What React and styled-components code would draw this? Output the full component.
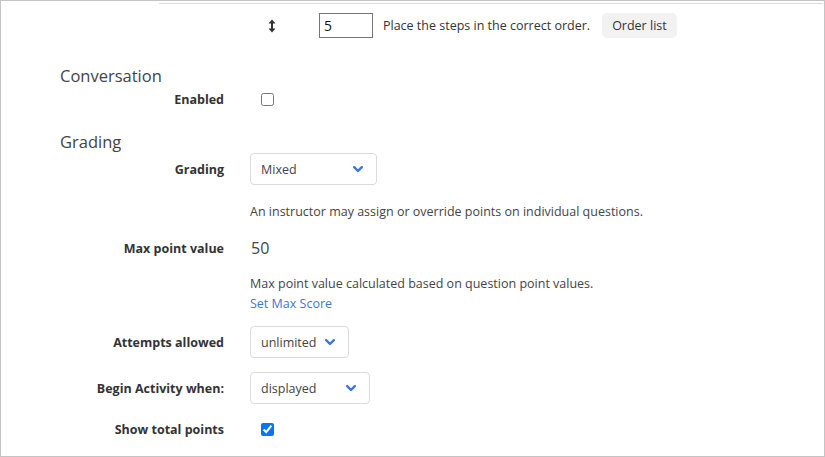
import React from "react";
import styled, { createGlobalStyle } from "styled-components";

const GlobalStyle = createGlobalStyle`
  html, body {
    margin: 0;
    padding: 0;
    background: #fff;
  }
  body {
    font-family: "Open Sans", "Liberation Sans", sans-serif;
    color: #333;
  }
`;

const Frame = styled.div`
  width: 825px;
  height: 457px;
  box-sizing: border-box;
  border: 1px solid #c4c4c4;
  overflow: hidden;
`;

const TopArea = styled.div`
  margin: 2px 1px 0 158px;
  border-top: 1px solid #dcdcdc;
`;

const TopRow = styled.div`
  display: flex;
  align-items: center;
  padding: 9px 0 0 88px;
  font-size: 12.5px;
`;

const IconCell = styled.div`
  width: 50px;
  display: flex;
  justify-content: center;
  margin-right: 22px;
`;

const StepInput = styled.div`
  width: 54px;
  height: 25px;
  box-sizing: border-box;
  border: 1px solid #767676;
  padding: 0 4px;
  font-size: 14px;
  line-height: 23px;
  color: #111;
  margin-right: 10px;
`;

const StepText = styled.span`
  color: #333;
  margin-right: 12px;
`;

const GhostButton = styled.div`
  height: 25px;
  padding: 0 10px;
  border-radius: 5px;
  background: #f2f2f2;
  line-height: 25px;
  color: #333;
`;

const Form = styled.div`
  padding-left: 59px;
`;

const Heading = styled.div`
  font-size: 16.5px;
  line-height: 24px;
  color: #444;
  margin-top: ${(p) => p.$top}px;
`;

const Row = styled.div`
  display: grid;
  grid-template-columns: 164px 1fr;
  column-gap: 26px;
  align-items: center;
  margin-top: ${(p) => p.$top || 0}px;
  min-height: 22px;
`;

const Label = styled.div`
  text-align: right;
  font-weight: 700;
  font-size: 12.5px;
  color: #333;
`;

const Value = styled.div`
  font-size: 12.5px;
  line-height: ${(p) => p.$lh || 18}px;
  color: #444;
`;

const BigNumber = styled.div`
  font-size: 16px;
  line-height: 24px;
  color: #444;
  padding-left: 1px;
`;

const Link = styled.a`
  color: #3b78d4;
  text-decoration: none;
`;

const Check = styled.input`
  width: 13px;
  height: 13px;
  margin: 0 0 0 11px;
  display: block;
`;

const SelectBox = styled.div`
  width: ${(p) => p.$width}px;
  height: 32px;
  box-sizing: border-box;
  border: 1px solid #dadada;
  border-radius: 4px;
  display: flex;
  align-items: center;
  justify-content: space-between;
  padding: 0 13px 0 10px;
  font-size: 12.5px;
  color: #444;
`;

const Chevron = () => (
  <svg width="10" height="7" viewBox="0 0 10 7">
    <path d="M1.2 1.2 L5 5 L8.8 1.2" fill="none" stroke="#3a78d8" strokeWidth="2.4" strokeLinecap="round" strokeLinejoin="round" />
  </svg>
);

const MoveIcon = () => (
  <svg width="8" height="14" viewBox="0 0 8 14">
    <path d="M4 0.5 L7.5 4.5 H0.5 Z M4 13.5 L7.5 9.5 H0.5 Z" fill="#333" />
    <rect x="3" y="4" width="2" height="6" fill="#333" />
  </svg>
);

const Select = ({ width, value }) => (
  <SelectBox $width={width}>
    <span>{value}</span>
    <Chevron />
  </SelectBox>
);

export default function App() {
  return (
    <>
      <GlobalStyle />
      <Frame>
        <TopArea>
          <TopRow>
            <IconCell>
              <MoveIcon />
            </IconCell>
            <StepInput>5</StepInput>
            <StepText>Place the steps in the correct order.</StepText>
            <GhostButton>Order list</GhostButton>
          </TopRow>
        </TopArea>
        <Form>
          <Heading $top={26}>Conversation</Heading>
          <Row>
            <Label>Enabled</Label>
            <div>
              <Check type="checkbox" readOnly />
            </div>
          </Row>
          <Heading $top={20}>Grading</Heading>
          <Row $top={-1}>
            <Label>Grading</Label>
            <div>
              <Select width={127} value="Mixed" />
            </div>
          </Row>
          <Row $top={16}>
            <span />
            <Value>An instructor may assign or override points on individual questions.</Value>
          </Row>
          <Row $top={13}>
            <Label>Max point value</Label>
            <BigNumber>50</BigNumber>
          </Row>
          <Row $top={14}>
            <span />
            <Value $lh={20}>
              Max point value calculated based on question point values.
              <br />
              <Link href="#">Set Max Score</Link>
            </Value>
          </Row>
          <Row $top={12}>
            <Label>Attempts allowed</Label>
            <div>
              <Select width={99} value="unlimited" />
            </div>
          </Row>
          <Row $top={14}>
            <Label>Begin Activity when:</Label>
            <div>
              <Select width={120} value="displayed" />
            </div>
          </Row>
          <Row $top={14}>
            <Label>Show total points</Label>
            <div>
              <Check type="checkbox" checked readOnly />
            </div>
          </Row>
        </Form>
      </Frame>
    </>
  );
}
